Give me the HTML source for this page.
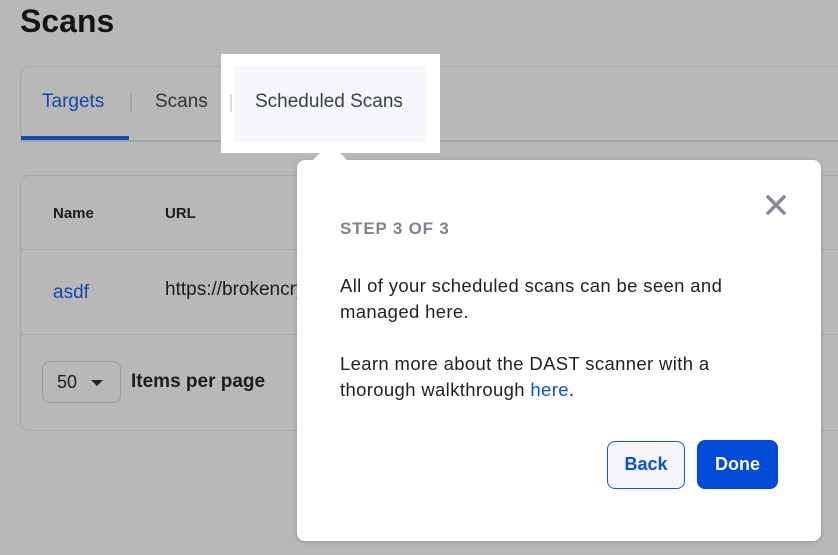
<!DOCTYPE html>
<html><head><style>
*{box-sizing:border-box;margin:0;padding:0}
body{width:838px;height:555px;background:#b8b8b8;font-family:"Liberation Sans",sans-serif;position:relative;overflow:hidden;color:#1d1d1f}
.a{position:absolute}
</style></head><body>
<div class="a" style="left:20px;top:3px;font-size:32px;font-weight:bold;color:#141414">Scans</div>
<div class="a" style="left:20px;top:66px;width:830px;height:76px;border:1px solid #a6a8ad;border-radius:9px"></div>
<div class="a" style="left:21px;top:140px;width:830px;height:2px;background:#a2a4a8"></div>
<div class="a" style="left:21px;top:136px;width:108px;height:4px;background:#0f4fb0"></div>
<div class="a" style="left:42px;top:91px;font-size:19px;color:#0f4aa8">Targets</div>
<div class="a" style="left:130px;top:94px;width:2px;height:18px;background:#a4a4a4"></div>
<div class="a" style="left:155px;top:91px;font-size:19px;color:#333">Scans</div>
<div class="a" style="left:221px;top:54px;width:219px;height:99px;background:#fff"></div>
<div class="a" style="left:234px;top:66px;width:192px;height:76px;background:#f5f7fb"></div>
<div class="a" style="left:230px;top:94px;width:2px;height:18px;background:#dcdcdc"></div>
<div class="a" style="left:255px;top:91px;font-size:19px;color:#3a3e48">Scheduled Scans</div>
<div class="a" style="left:20px;top:175px;width:830px;height:256px;border:1px solid #a6a8ad;border-radius:9px"></div>
<div class="a" style="left:21px;top:249px;width:830px;height:1px;background:#a6a8ad"></div>
<div class="a" style="left:21px;top:334px;width:830px;height:1px;background:#a6a8ad"></div>
<div class="a" style="left:53px;top:205px;font-size:15px;font-weight:bold">Name</div>
<div class="a" style="left:165px;top:205px;font-size:15px;font-weight:bold">URL</div>
<div class="a" style="left:53px;top:282px;font-size:19px;color:#0f4aa8">asdf</div>
<div class="a" style="left:165px;top:279px;font-size:19px">https://brokencrystals</div>
<div class="a" style="left:42px;top:361px;width:79px;height:42px;border:1px solid #9a9ca0;border-radius:8px"></div>
<div class="a" style="left:57px;top:372px;font-size:18px">50</div>
<div class="a" style="left:91px;top:380px;border-left:6px solid transparent;border-right:6px solid transparent;border-top:6px solid #222"></div>
<div class="a" style="left:131px;top:371px;font-size:19px;font-weight:bold">Items per page</div>
<div class="a" style="left:297px;top:160px;width:524px;height:381px;background:#fff;border-radius:8px;box-shadow:0 1px 4px rgba(0,0,0,.2)"></div>
<div class="a" style="left:313px;top:143px;width:34px;height:34px"><svg width="34" height="34"><polygon points="17,0 34,17 0,17" fill="#fff"/></svg></div>
<svg class="a" style="left:765px;top:194px" width="22" height="22"><path d="M3 3L19 19M19 3L3 19" stroke="#858a95" stroke-width="3.5" stroke-linecap="round"/></svg>
<div class="a" style="left:340px;top:219px;font-size:17px;font-weight:bold;color:#7f848e;letter-spacing:.8px">STEP 3 OF 3</div>
<div class="a" style="left:340px;top:273px;font-size:18.5px;letter-spacing:.35px;line-height:26px;color:#222;width:410px">All of your scheduled scans can be seen and managed here.<br><br>Learn more about the DAST scanner with a thorough walkthrough <span style="color:#0b4fd6">here</span>.</div>
<div class="a" style="left:607px;top:441px;width:78px;height:48px;border:1.5px solid #1a55d6;border-radius:8px;background:#f5f7fd;color:#0b4fd6;font-weight:bold;font-size:18px;text-align:center;line-height:45px">Back</div>
<div class="a" style="left:697px;top:440px;width:81px;height:49px;border-radius:8px;background:#004ad8;color:#fff;font-weight:bold;font-size:18px;text-align:center;line-height:49px">Done</div>
</body></html>
